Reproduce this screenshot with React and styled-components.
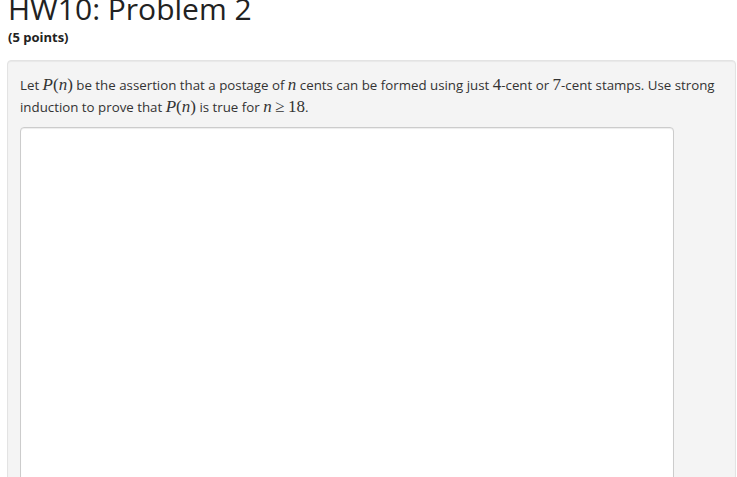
import React from "react";
import styled, { createGlobalStyle } from "styled-components";

const Global = createGlobalStyle`
  html, body { margin: 0; padding: 0; background: #fff; }
  body {
    font-family: "Open Sans", "Noto Sans", sans-serif;
    font-size: 14px;
    line-height: 20px;
    color: #333;
    overflow: hidden;
  }
`;

const Page = styled.div`
  padding: 0 1px 0 7px;
`;

const Title = styled.h1`
  margin: -8px 0 0 1px;
  font-size: 30px;
  line-height: 33px;
  font-weight: 400;
  color: #222;
`;

const Points = styled.div`
  margin: 3px 0 0 1px;
  font-size: 13px;
  font-weight: 700;
  line-height: 18px;
  color: #222;
`;

const Well = styled.div`
  margin-top: 14px;
  background: #f4f4f4;
  border: 1px solid #e3e3e3;
  border-radius: 4px;
  padding: 13px 12px 0 12px;
  box-shadow: inset 0 1px 1px rgba(0, 0, 0, 0.05);
`;

const Prompt = styled.p`
  margin: 0 0 9px 0;
  font-size: 13.3px;
  line-height: 21px;
`;

const Math = styled.span`
  font-family: "Liberation Serif", "DejaVu Serif", serif;
  font-size: 17px;
  font-style: ${(p) => (p.$italic ? "italic" : "normal")};
`;

const Answer = styled.textarea`
  display: block;
  box-sizing: border-box;
  width: 654px;
  height: 420px;
  background: #fff;
  border: 1px solid #ccc;
  border-radius: 4px;
  box-shadow: inset 0 1px 1px rgba(0, 0, 0, 0.075);
  resize: none;
  outline: none;
  font: inherit;
`;

const I = ({ children }) => <Math $italic>{children}</Math>;
const R = ({ children }) => <Math>{children}</Math>;

export default function App() {
  return (
    <Page>
      <Global />
      <Title>HW10: Problem 2</Title>
      <Points>(5 points)</Points>
      <Well>
        <Prompt>
          Let <I>P</I><R>(</R><I>n</I><R>)</R> be the assertion that a postage of{" "}
          <I>n</I> cents can be formed using just <R>4</R>-cent or <R>7</R>-cent
          stamps. Use strong induction to prove that <I>P</I><R>(</R><I>n</I>
          <R>)</R> is true for <I>n</I> <R>≥</R> <R>18</R>.
        </Prompt>
        <Answer />
      </Well>
    </Page>
  );
}
